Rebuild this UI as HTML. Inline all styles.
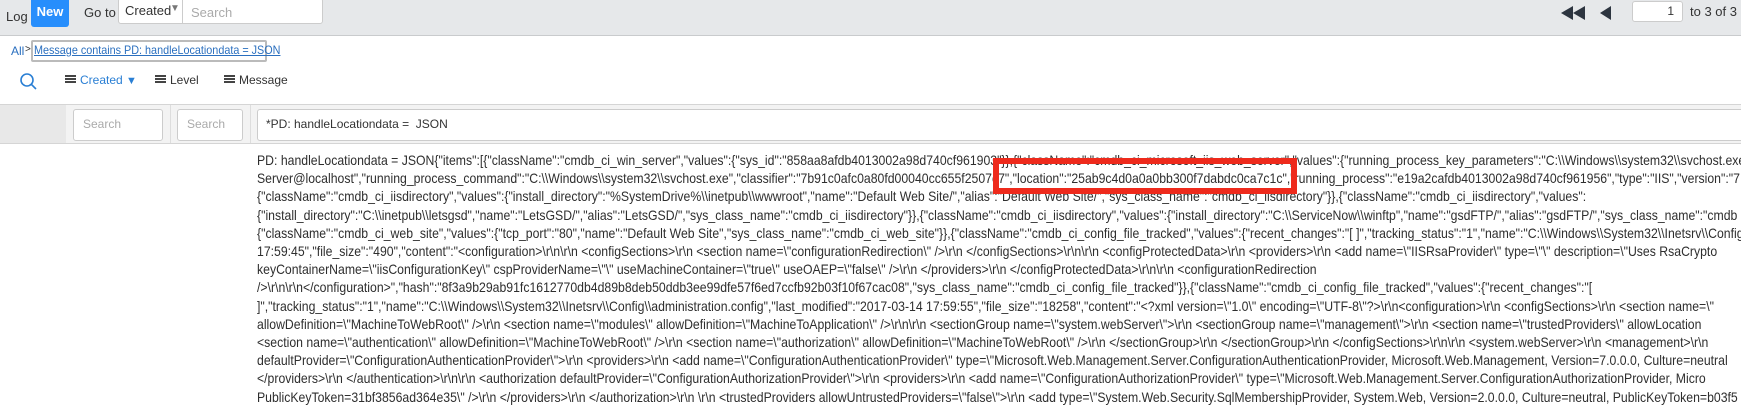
<!DOCTYPE html>
<html><head><style>
body{margin:0;width:1741px;height:405px;overflow:hidden;background:#fff;font-family:"Liberation Sans",sans-serif;position:relative;color:#333}
.a{position:absolute}
.top{left:0;top:0;width:1741px;height:35px;background:#e6e8ea;border-bottom:1px solid #c9cbcd}
.inp{background:#fff;border:1px solid #ccc;border-radius:3px;box-sizing:border-box}
.ln{position:absolute;left:257px;white-space:nowrap;font-size:14px;line-height:16px;transform:scaleX(0.875);transform-origin:0 0;color:#2e2e2e}
.ham{display:inline-block;width:11px;height:8px;border-top:2px solid #444;border-bottom:2px solid #444;position:relative;box-sizing:border-box;margin-right:4px;vertical-align:1px}
.ham:after{content:"";position:absolute;left:0;right:0;top:1px;height:2px;background:#444}
</style></head><body>
<div class="a top"></div>
<div class="a" style="left:6px;top:9px;font-size:13px">Log</div>
<div class="a" style="left:31px;top:0;width:38px;height:27px;background:#278efc;border-radius:0 0 3px 3px;color:#fff;font-size:13px;font-weight:bold;text-align:center;line-height:24px">New</div>
<div class="a" style="left:84px;top:5px;font-size:13px">Go to</div>
<div class="a inp" style="left:118px;top:-2px;width:205px;height:26px"></div>
<div class="a" style="left:182px;top:-2px;width:1px;height:26px;background:#ccc"></div>
<div class="a" style="left:125px;top:3px;font-size:13px">Created</div>
<div class="a" style="left:170px;top:3px;font-size:10px;color:#777">▼</div>
<div class="a" style="left:191px;top:5px;font-size:13px;color:#aaa">Search</div>
<svg class="a" style="left:1561px;top:6px" width="52" height="14"><polygon points="0,7 12,0 12,14" fill="#2d3540"/><polygon points="12,7 24,0 24,14" fill="#2d3540"/><polygon points="39,7 50,0 50,14" fill="#2d3540"/></svg>
<div class="a inp" style="left:1632px;top:1px;width:51px;height:21px;font-size:12px;text-align:right;padding-right:8px;line-height:19px">1</div>
<div class="a" style="left:1690px;top:4px;font-size:13px">to 3 of 3</div>

<div class="a" style="left:11px;top:44px;font-size:12px;color:#2a6fbf">All</div>
<div class="a" style="left:25px;top:44px;font-size:10px">&gt;</div>
<div class="a" style="left:31px;top:40px;width:236px;height:22px;border:2px solid #bbb;box-sizing:border-box;border-radius:2px"></div>
<div class="a" style="left:34px;top:43px;font-size:12px;color:#2a6fbf;text-decoration:underline;transform:scaleX(0.9);transform-origin:0 0;white-space:nowrap">Message contains PD: handleLocationdata = JSON</div>

<svg class="a" style="left:19px;top:72px" width="20" height="20"><circle cx="8" cy="8" r="6" fill="none" stroke="#2a7fd4" stroke-width="1.6"/><line x1="12.3" y1="12.3" x2="17" y2="17" stroke="#2a7fd4" stroke-width="1.6"/></svg>
<div class="a" style="left:65px;top:73px;font-size:12px;color:#2a7fd4"><span class="ham"></span>Created <span style="font-size:11px">▼</span></div>
<div class="a" style="left:155px;top:73px;font-size:12px"><span class="ham"></span>Level</div>
<div class="a" style="left:224px;top:73px;font-size:12px"><span class="ham"></span>Message</div>

<div class="a" style="left:0;top:104px;width:1741px;height:38px;background:#f3f3f3;border-top:1px solid #d5d5d5;border-bottom:1px solid #d5d5d5"></div>
<div class="a" style="left:0;top:105px;width:66px;height:38px;background:#e8e8e8"></div>
<div class="a" style="left:170px;top:105px;width:1px;height:38px;background:#ddd"></div>
<div class="a" style="left:250px;top:105px;width:1px;height:38px;background:#ddd"></div>
<div class="a inp" style="left:73px;top:109px;width:90px;height:32px"></div>
<div class="a inp" style="left:177px;top:109px;width:66px;height:32px"></div>
<div class="a inp" style="left:257px;top:109px;width:1500px;height:32px"></div>
<div class="a" style="left:83px;top:117px;font-size:12px;color:#aaa">Search</div>
<div class="a" style="left:187px;top:117px;font-size:12px;color:#aaa">Search</div>
<div class="a" style="left:266px;top:117px;font-size:12px;white-space:nowrap">*PD: handleLocationdata =&nbsp; JSON</div>

<div class="ln" style="top:152px">PD: handleLocationdata = JSON{"items":[{"className":"cmdb_ci_win_server","values":{"sys_id":"858aa8afdb4013002a98d740cf961903"}},{"className":"cmdb_ci_microsoft_iis_web_server","values":{"running_process_key_parameters":"C:\\Windows\\system32\\svchost.exe -k iissvcs"</div>
<div class="ln" style="top:170px">Server@localhost","running_process_command":"C:\\Windows\\system32\\svchost.exe","classifier":"7b91c0afc0a80fd00040cc655f2507c7","location":"25ab9c4d0a0a0bb300f7dabdc0ca7c1c","running_process":"e19a2cafdb4013002a98d740cf961956","type":"IIS","version":"7.5"</div>
<div class="ln" style="top:188px">{"className":"cmdb_ci_iisdirectory","values":{"install_directory":"%SystemDrive%\\inetpub\\wwwroot","name":"Default Web Site/","alias":"Default Web Site/","sys_class_name":"cmdb_ci_iisdirectory"}},{"className":"cmdb_ci_iisdirectory","values":</div>
<div class="ln" style="top:207px">{"install_directory":"C:\\inetpub\\letsgsd","name":"LetsGSD/","alias":"LetsGSD/","sys_class_name":"cmdb_ci_iisdirectory"}},{"className":"cmdb_ci_iisdirectory","values":{"install_directory":"C:\\ServiceNow\\winftp","name":"gsdFTP/","alias":"gsdFTP/","sys_class_name":"cmdb</div>
<div class="ln" style="top:225px">{"className":"cmdb_ci_web_site","values":{"tcp_port":"80","name":"Default Web Site","sys_class_name":"cmdb_ci_web_site"}},{"className":"cmdb_ci_config_file_tracked","values":{"recent_changes":"[ ]","tracking_status":"1","name":"C:\\Windows\\System32\\Inetsrv\\Config</div>
<div class="ln" style="top:243px">17:59:45","file_size":"490","content":"&lt;configuration&gt;\r\n\r\n &lt;configSections&gt;\r\n &lt;section name=\"configurationRedirection\" /&gt;\r\n &lt;/configSections&gt;\r\n\r\n &lt;configProtectedData&gt;\r\n &lt;providers&gt;\r\n &lt;add name=\"IISRsaProvider\" type=\"\" description=\"Uses RsaCrypto</div>
<div class="ln" style="top:261px">keyContainerName=\"iisConfigurationKey\" cspProviderName=\"\" useMachineContainer=\"true\" useOAEP=\"false\" /&gt;\r\n &lt;/providers&gt;\r\n &lt;/configProtectedData&gt;\r\n\r\n &lt;configurationRedirection</div>
<div class="ln" style="top:279px">/&gt;\r\n\r\n&lt;/configuration&gt;","hash":"8f3a9b29ab91fc1612770db4d89b8deb50ddb3ee99dfe57f6ed7ccfb92b03f10f67cac08","sys_class_name":"cmdb_ci_config_file_tracked"}},{"className":"cmdb_ci_config_file_tracked","values":{"recent_changes":"[</div>
<div class="ln" style="top:298px">]","tracking_status":"1","name":"C:\\Windows\\System32\\Inetsrv\\Config\\administration.config","last_modified":"2017-03-14 17:59:55","file_size":"18258","content":"&lt;?xml version=\"1.0\" encoding=\"UTF-8\"?&gt;\r\n&lt;configuration&gt;\r\n &lt;configSections&gt;\r\n &lt;section name=\"</div>
<div class="ln" style="top:316px">allowDefinition=\"MachineToWebRoot\" /&gt;\r\n &lt;section name=\"modules\" allowDefinition=\"MachineToApplication\" /&gt;\r\n\r\n &lt;sectionGroup name=\"system.webServer\"&gt;\r\n &lt;sectionGroup name=\"management\"&gt;\r\n &lt;section name=\"trustedProviders\" allowLocation</div>
<div class="ln" style="top:334px">&lt;section name=\"authentication\" allowDefinition=\"MachineToWebRoot\" /&gt;\r\n &lt;section name=\"authorization\" allowDefinition=\"MachineToWebRoot\" /&gt;\r\n &lt;/sectionGroup&gt;\r\n &lt;/sectionGroup&gt;\r\n &lt;/configSections&gt;\r\n\r\n &lt;system.webServer&gt;\r\n &lt;management&gt;\r\n</div>
<div class="ln" style="top:352px">defaultProvider=\"ConfigurationAuthenticationProvider\"&gt;\r\n &lt;providers&gt;\r\n &lt;add name=\"ConfigurationAuthenticationProvider\" type=\"Microsoft.Web.Management.Server.ConfigurationAuthenticationProvider, Microsoft.Web.Management, Version=7.0.0.0, Culture=neutral</div>
<div class="ln" style="top:370px">&lt;/providers&gt;\r\n &lt;/authentication&gt;\r\n\r\n &lt;authorization defaultProvider=\"ConfigurationAuthorizationProvider\"&gt;\r\n &lt;providers&gt;\r\n &lt;add name=\"ConfigurationAuthorizationProvider\" type=\"Microsoft.Web.Management.Server.ConfigurationAuthorizationProvider, Micro</div>
<div class="ln" style="top:389px">PublicKeyToken=31bf3856ad364e35\" /&gt;\r\n &lt;/providers&gt;\r\n &lt;/authorization&gt;\r\n \r\n &lt;trustedProviders allowUntrustedProviders=\"false\"&gt;\r\n &lt;add type=\"System.Web.Security.SqlMembershipProvider, System.Web, Version=2.0.0.0, Culture=neutral, PublicKeyToken=b03f5</div>

<div class="a" style="left:993px;top:158px;width:304px;height:36px;border:6px solid #ee2a1c;box-sizing:border-box"></div>
</body></html>
